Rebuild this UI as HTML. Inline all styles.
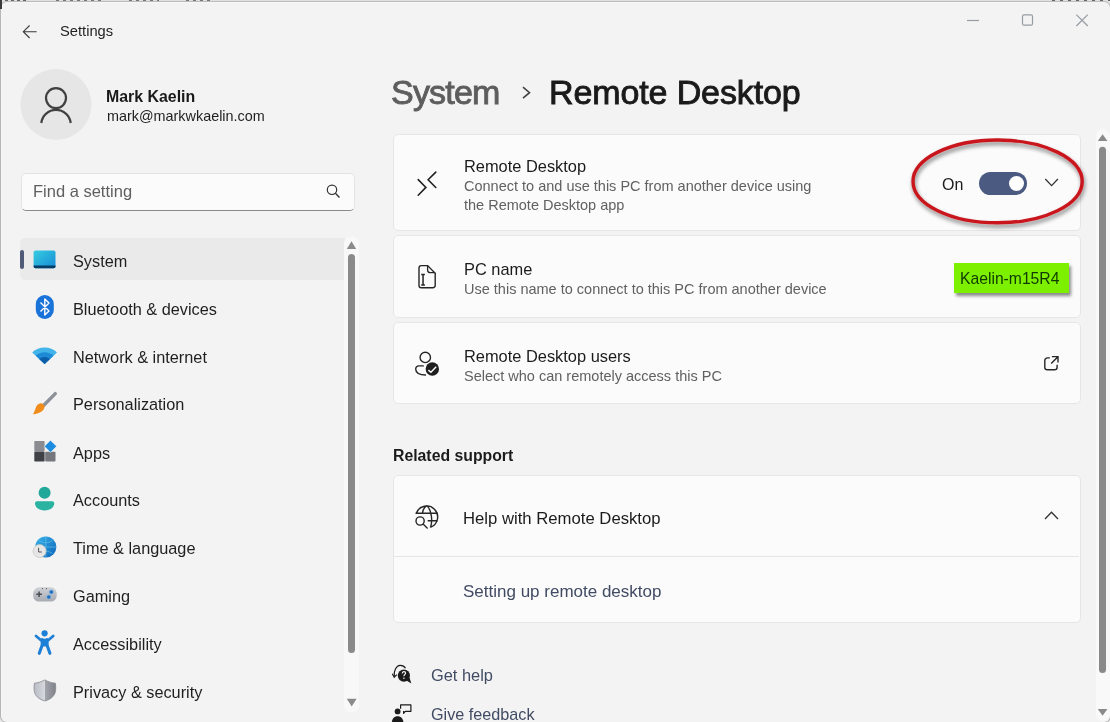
<!DOCTYPE html>
<html><head><meta charset="utf-8">
<style>
html,body{margin:0;padding:0;}
body{width:1110px;height:722px;overflow:hidden;position:relative;background:#e8e8e8;font-family:"Liberation Sans",sans-serif;}
#win{position:absolute;left:0;top:1px;width:1109px;height:720px;background:#f3f3f3;border-radius:7px;border:1px solid #bcbcbc;border-left-color:#b5b5b5;box-shadow:inset 1px 1px 0 #f7f7f7;}
.t{position:absolute;line-height:1;white-space:nowrap;color:#1b1b1b;will-change:transform;}
.card{position:absolute;left:393px;width:687.5px;background:#fbfbfb;border:1px solid #e6e6e6;border-radius:5px;box-sizing:border-box;}
svg{position:absolute;overflow:visible;}
.nav{font-size:16.3px;left:73px;color:#1f1f1f;}
.desc{font-size:14.5px;color:#616161;left:464px;}
.ctitle{font-size:16.4px;left:464px;color:#1b1b1b;}
</style></head><body>
<!-- background window strip -->
<div style="position:absolute;left:0;top:0;width:1110px;height:2px;background:#e0e0e0"></div>
<div id="win"></div>

<div style="position:absolute;left:0;top:0;width:2px;height:9px;background:#3a3a3a"></div>
<div style="position:absolute;left:5px;top:0;width:23px;height:1px;background:repeating-linear-gradient(90deg,#666 0 3px,transparent 3px 6px)"></div>
<div style="position:absolute;left:56px;top:0;width:48px;height:1px;background:repeating-linear-gradient(90deg,#777 0 3px,transparent 3px 7px)"></div>
<div style="position:absolute;left:129px;top:0;width:30px;height:1px;background:repeating-linear-gradient(90deg,#777 0 3px,transparent 3px 7px)"></div>
<div style="position:absolute;left:186px;top:0;width:28px;height:1px;background:repeating-linear-gradient(90deg,#777 0 3px,transparent 3px 7px)"></div>
<div style="position:absolute;left:1052px;top:0;width:58px;height:1px;background:repeating-linear-gradient(90deg,#666 0 3px,transparent 3px 8px)"></div>
<!-- header -->
<svg style="left:0;top:0" width="1110" height="722" viewBox="0 0 1110 722">
  <path d="M36.7 31.7H23.6M29.6 25.5L23.3 31.7L29.6 38" fill="none" stroke="#3a3a3a" stroke-width="1.1"/>
  <path d="M967 20.5H979" stroke="#979ca4" stroke-width="1.2"/>
  <rect x="1022.5" y="14.9" width="10" height="10.3" rx="1.5" fill="none" stroke="#979ca4" stroke-width="1.2"/>
  <path d="M1076.3 14.6L1087.8 26M1087.8 14.6L1076.3 26" stroke="#979ca4" stroke-width="1.2"/>
  <circle cx="56" cy="104.5" r="35.5" fill="#e6e6e6"/>
  <circle cx="56" cy="98.1" r="10" fill="none" stroke="#404040" stroke-width="2.2"/>
  <path d="M41.3 123A14.8 14.8 0 0 1 70.7 123" fill="none" stroke="#404040" stroke-width="2.2"/>
</svg>
<div class="t" style="left:60.2px;top:23.8px;font-size:14.7px;color:#1f1f1f">Settings</div>
<div class="t" style="left:106.3px;top:89px;font-size:15.9px;font-weight:bold;color:#1a1a1a">Mark Kaelin</div>
<div class="t" style="left:106.5px;top:109.1px;font-size:14.4px;color:#1f1f1f">mark@markwkaelin.com</div>

<!-- search -->
<div style="position:absolute;left:21px;top:173px;width:334px;height:38px;box-sizing:border-box;background:#fbfbfb;border:1px solid #e4e4e4;border-bottom:1px solid #8a8a8a;border-radius:5px"></div>
<div class="t" style="left:33px;top:183px;font-size:16.5px;color:#5f5f5f">Find a setting</div>
<svg style="left:0;top:0" width="1110" height="722">
  <circle cx="332" cy="189.8" r="4.7" fill="none" stroke="#333" stroke-width="1.2"/>
  <path d="M335.4 193.2L339.5 197.5" stroke="#333" stroke-width="1.3"/>
</svg>

<!-- nav selected -->
<div style="position:absolute;left:20px;top:238px;width:324.5px;height:42px;background:#eaeaea;border-radius:5px 1px 1px 5px"></div>
<div style="position:absolute;left:20px;top:250px;width:4px;height:19.4px;background:#4f5a78;border-radius:2px"></div>

<div class="t nav" style="top:252.7px">System</div>
<div class="t nav" style="top:300.7px">Bluetooth &amp; devices</div>
<div class="t nav" style="top:348.5px">Network &amp; internet</div>
<div class="t nav" style="top:396.4px">Personalization</div>
<div class="t nav" style="top:444.5px">Apps</div>
<div class="t nav" style="top:492.3px">Accounts</div>
<div class="t nav" style="top:540.2px">Time &amp; language</div>
<div class="t nav" style="top:588.2px">Gaming</div>
<div class="t nav" style="top:635.8px">Accessibility</div>
<div class="t nav" style="top:683.9px">Privacy &amp; security</div>

<!-- nav icons -->
<svg style="left:0;top:0" width="1110" height="722">
  <defs>
    <linearGradient id="gsys" x1="0" y1="0" x2="1" y2="1"><stop offset="0" stop-color="#36cde0"/><stop offset="1" stop-color="#168ad6"/></linearGradient>
    <linearGradient id="gtime" x1="0" y1="0" x2="1" y2="1"><stop offset="0" stop-color="#38b4ea"/><stop offset="1" stop-color="#0d62b8"/></linearGradient>
    <linearGradient id="ggam" x1="0" y1="0" x2="0" y2="1"><stop offset="0" stop-color="#cfd2d7"/><stop offset="1" stop-color="#a7abb1"/></linearGradient>
    <linearGradient id="gsh" x1="0" y1="0" x2="1" y2="0"><stop offset="0" stop-color="#b9bdc4"/><stop offset="0.5" stop-color="#d6d9de"/><stop offset="0.5" stop-color="#a3a7ad"/><stop offset="1" stop-color="#7f8389"/></linearGradient>
  </defs>
  <!-- system -->
  <rect x="33.6" y="250.5" width="21.9" height="17.8" rx="1.8" fill="url(#gsys)"/>
  <path d="M33.6 265.6H55.5V266.5A1.8 1.8 0 0 1 53.7 268.3H35.4A1.8 1.8 0 0 1 33.6 266.5Z" fill="#063d66"/>
  <!-- bluetooth -->
  <rect x="35.8" y="295" width="18" height="24" rx="9" fill="#1a73d9"/>
  <path d="M40.5 302.5L49 311L44.8 315V299L49 303L40.5 311.5" fill="none" stroke="#fff" stroke-width="1.4" stroke-linejoin="round"/>
  <!-- wifi -->
  <path d="M32.2 352.5A18 18 0 0 1 57 352.5L44.6 364Z" fill="#43b4ea"/>
  <path d="M35.7 355.8A13 13 0 0 1 53.5 355.8L44.6 364Z" fill="#1e8ad6"/>
  <path d="M39.2 359A8 8 0 0 1 50 359L44.6 364Z" fill="#0d5ea8"/>
  <!-- brush -->
  <path d="M55.3 393.6L43.8 405.2" stroke="#8d9198" stroke-width="3.4" stroke-linecap="round"/>
  <path d="M39.8 403.4C41.8 402.8 44.3 404.3 44.6 406.4C44.3 410.2 40.5 413.6 33 414.2C34.4 412.2 35.2 409 36.3 406.6C37.1 404.9 38.3 403.8 39.8 403.4Z" fill="#f08c1c"/>
  <!-- apps -->
  <rect x="34.3" y="441" width="10.3" height="10.3" rx="0.8" fill="#8a8c91"/>
  <rect x="34.3" y="451.6" width="10.3" height="10" rx="0.8" fill="#3f4146"/>
  <rect x="45.2" y="451.8" width="10.3" height="9.8" rx="0.8" fill="#75777c"/>
  <path d="M50.5 440.2L56.6 446.3L50.5 452.4L44.4 446.3Z" fill="#1b8ce0" stroke="#f3f3f3" stroke-width="0.6"/>
  <!-- accounts -->
  <circle cx="44.6" cy="492.8" r="6" fill="#22a898"/>
  <path d="M37 501.3H52.2A2 2 0 0 1 54.2 503.3C54.2 507.5 50 510.5 44.6 510.5C39.2 510.5 35 507.5 35 503.3A2 2 0 0 1 37 501.3Z" fill="#29b3a0"/>
  <!-- time -->
  <circle cx="45.8" cy="547" r="10.6" fill="url(#gtime)"/>
  <path d="M36 547H56M45.8 536.5V557.5M39 540.5C43.5 543.5 48 543.5 52.5 540.5M39 553.5C43.5 550.5 48 550.5 52.5 553.5" stroke="#6cc6f0" stroke-width="0.6" fill="none"/>
  <circle cx="39.6" cy="551" r="6.5" fill="#e6e6e6" stroke="#c4c4c4" stroke-width="0.7"/>
  <path d="M38.6 547.8V552H41.8" stroke="#555" stroke-width="1" fill="none"/>
  <!-- gaming -->
  <path d="M39 587.2H50.8C54 587.2 56.8 590.5 56.8 594.5C56.8 598.8 54.3 601.6 51 601.6H38.8C35.5 601.6 33 598.8 33 594.5C33 590.5 35.8 587.2 39 587.2Z" fill="url(#ggam)"/>
  <path d="M36.3 594.2H41.9M39.1 591.4V597" stroke="#4a4d52" stroke-width="1.5"/>
  <circle cx="42.5" cy="588.6" r="0.6" fill="#555"/><circle cx="46.5" cy="588.6" r="0.6" fill="#555"/>
  <circle cx="51.3" cy="592" r="2.1" fill="#1f6fc0" stroke="#8cb8e6" stroke-width="0.6"/><circle cx="48.8" cy="597" r="2.1" fill="#1f6fc0" stroke="#8cb8e6" stroke-width="0.6"/>
  <!-- accessibility -->
  <circle cx="44.6" cy="633.3" r="3.1" fill="#1e7fd6"/>
  <path d="M36 636L41 640.2H48.2L53.2 636" stroke="#1e7fd6" stroke-width="2.8" fill="none" stroke-linecap="round" stroke-linejoin="round"/>
  <path d="M42.2 639.5V645L39.3 653.3M47 639.5V645L49.9 653.3" stroke="#1e7fd6" stroke-width="3.1" fill="none" stroke-linecap="round"/>
  <path d="M41 639.5H48.2V646.5H41Z" fill="#1e7fd6"/>
  <!-- shield -->
  <path d="M44.9 679.9C40.8 682.2 37.5 682.9 34.4 683.2C34 686 34 688 34.2 690.5C34.8 696 39 699.3 44.9 701C50.8 699.3 55 696 55.6 690.5C55.8 688 55.8 686 55.4 683.2C52.3 682.9 49 682.2 44.9 679.9Z" fill="url(#gsh)" stroke="#85888e" stroke-width="0.8"/>
  <!-- nav scrollbar -->
  <rect x="344" y="236.5" width="15" height="476" rx="7" fill="#f8f8f8"/>
  <path d="M346.8 248.9L351.5 241.3L356.2 248.9Z" fill="#8a8a8a"/>
  <rect x="348" y="254" width="7" height="399" rx="3.5" fill="#8a8a8a"/>
  <path d="M346.8 698.8L351.7 706.4L356.6 698.8Z" fill="#8a8a8a"/>
</svg>

<!-- main title -->
<div class="t" style="left:390.5px;top:74.5px;font-size:34px;color:#5d5d5d;letter-spacing:-0.8px;-webkit-text-stroke:0.9px #5d5d5d">System</div>
<svg style="left:0;top:0" width="1110" height="722">
  <path d="M523 87.2L529.5 92.7L523 98.2" fill="none" stroke="#444" stroke-width="1.6"/>
</svg>
<div class="t" style="left:548.7px;top:74.5px;font-size:34px;color:#1a1a1a;letter-spacing:-0.12px;-webkit-text-stroke:0.9px #1a1a1a">Remote Desktop</div>

<!-- cards -->
<div class="card" style="top:134px;height:96.5px"></div>
<div class="card" style="top:235px;height:82.5px"></div>
<div class="card" style="top:321.5px;height:82px"></div>

<div class="t ctitle" style="top:157.5px">Remote Desktop</div>
<div class="t desc" style="top:178.5px">Connect to and use this PC from another device using</div>
<div class="t desc" style="top:198.1px">the Remote Desktop app</div>
<div class="t ctitle" style="top:261.1px">PC name</div>
<div class="t desc" style="top:282.1px">Use this name to connect to this PC from another device</div>
<div class="t ctitle" style="top:347.7px">Remote Desktop users</div>
<div class="t desc" style="top:368.5px">Select who can remotely access this PC</div>

<div class="t" style="left:941.5px;top:176.9px;font-size:16px;color:#1b1b1b">On</div>
<div style="position:absolute;left:979.3px;top:171.8px;width:48px;height:23px;border-radius:11.5px;background:#4a5a80"></div>
<div style="position:absolute;left:1009px;top:176px;width:15px;height:15px;border-radius:50%;background:#fff"></div>

<svg style="left:0;top:0" width="1110" height="722">
  <defs>
    <filter id="shd" x="-20%" y="-30%" width="140%" height="160%"><feGaussianBlur in="SourceAlpha" stdDeviation="2"/><feOffset dx="1" dy="2.5"/><feComponentTransfer><feFuncA type="linear" slope="0.5"/></feComponentTransfer><feMerge><feMergeNode/><feMergeNode in="SourceGraphic"/></feMerge></filter>
  </defs>
  <!-- remote desktop icon -->
  <path d="M418.2 179.6L425.9 187.4L418.2 195.3M435.8 172.1L428.1 179.8L435.8 187.5" fill="none" stroke="#1f1f1f" stroke-width="1.55" stroke-linecap="round"/>
  <!-- chevron down -->
  <path d="M1045.3 179L1051.6 185.6L1057.9 179" fill="none" stroke="#333" stroke-width="1.3"/>
  <!-- ellipse -->
  <ellipse cx="997.6" cy="181.4" rx="84.6" ry="41.4" fill="none" stroke="#c8151d" stroke-width="3.4" filter="url(#shd)"/>
  <!-- pc name icon -->
  <path d="M421.3 265.6H427.6L435.2 273.2V285.4A2.3 2.3 0 0 1 432.9 287.7H421.3A2.3 2.3 0 0 1 419 285.4V267.9A2.3 2.3 0 0 1 421.3 265.6Z" fill="none" stroke="#262626" stroke-width="1.4"/>
  <path d="M427.6 265.6V269.9A2.8 2.8 0 0 0 430.4 272.7H435.2" fill="none" stroke="#262626" stroke-width="1.3"/>
  <path d="M421.2 274.6H424.9M423.05 274.6V285M421.2 285H424.9" fill="none" stroke="#262626" stroke-width="1.5"/>
  <!-- users icon -->
  <circle cx="425.3" cy="357.4" r="5.2" fill="none" stroke="#262626" stroke-width="1.4"/>
  <path d="M423.8 365.9H418.8A3.1 3.1 0 0 0 415.7 369C415.7 372.6 419.3 375 426 375" fill="none" stroke="#262626" stroke-width="1.4"/>
  <circle cx="432.3" cy="369" r="7.6" fill="#fbfbfb"/>
  <circle cx="432.3" cy="369" r="6.7" fill="#1f1f1f"/>
  <path d="M428.4 370.1L430.9 372.3L436.2 366.8" fill="none" stroke="#fff" stroke-width="1.4"/>
  <!-- ext link -->
  <path d="M1049.9 357.9H1047.4A2.6 2.6 0 0 0 1044.8 360.5V367.2A2.6 2.6 0 0 0 1047.4 369.8H1054.5A2.6 2.6 0 0 0 1057.1 367.2V364.8" fill="none" stroke="#262626" stroke-width="1.4"/>
  <path d="M1051.2 363.4L1057.7 356.9M1051.9 356.6H1058V362.6" fill="none" stroke="#262626" stroke-width="1.4"/>
</svg>

<div style="position:absolute;left:953.5px;top:263.2px;width:115.8px;height:30.3px;background:#7df000;box-shadow:2px 3px 3px rgba(0,0,0,0.45)"></div>
<div class="t" style="left:959.8px;top:271.3px;font-size:15.7px;color:#103a00">Kaelin-m15R4</div>

<!-- related support -->
<div class="t" style="left:393.3px;top:447.6px;font-size:15.8px;font-weight:bold;color:#1b1b1b">Related support</div>
<div class="card" style="top:475px;height:147.5px"></div>
<div style="position:absolute;left:394px;top:556px;width:685px;height:1px;background:#e5e5e5"></div>
<div class="t" style="left:463.4px;top:510.7px;font-size:16.7px;color:#1b1b1b">Help with Remote Desktop</div>
<div class="t" style="left:463px;top:583.2px;font-size:17px;color:#414b63">Setting up remote desktop</div>

<svg style="left:0;top:0" width="1110" height="722">
  <!-- globe search -->
  <path d="M416.3 513.2A11 11 0 1 1 430.4 527.3M415.5 513.2H438M427.7 520.7H437.8M426.7 505.7C424 507.5 422.7 510.3 422.4 513.2M426.7 505.7C431.8 509.5 432.8 521.5 430.4 527.6" fill="none" stroke="#262626" stroke-width="1.4"/>
  <circle cx="420.1" cy="521" r="4.1" fill="none" stroke="#262626" stroke-width="1.4"/>
  <path d="M423.1 524L427.6 528.5" stroke="#262626" stroke-width="1.4"/>
  <!-- chevron up -->
  <path d="M1045 519L1051.5 512.3L1058 519" fill="none" stroke="#333" stroke-width="1.3"/>
  <!-- get help icon -->
  <circle cx="403.9" cy="675.6" r="6.1" fill="#1b1b1b"/>
  <path d="M406.5 680.5L411.3 683.4L409.6 677.8Z" fill="#1b1b1b"/>
  <path d="M394.2 676.2C393.6 670.5 396.5 665.5 400 665.3C402.5 665.2 404.5 666.5 405.5 668.3" fill="none" stroke="#1b1b1b" stroke-width="1.2"/>
  <path d="M392.3 673.8L394.2 677.3L396.8 674.6" fill="none" stroke="#1b1b1b" stroke-width="1.2"/>
  <path d="M402.2 673.6C402.2 672.3 403 671.6 403.9 671.6C404.9 671.6 405.6 672.3 405.6 673.2C405.6 674.4 403.9 674.6 403.9 676.3" fill="none" stroke="#fff" stroke-width="1.1"/>
  <circle cx="403.9" cy="678.3" r="0.7" fill="#fff"/>
  <!-- give feedback icon -->
  <path d="M400.6 708.8V704.9H410.9V711.3H405.3L403.6 713.3V711" fill="none" stroke="#1b1b1b" stroke-width="1.2" stroke-linejoin="round"/>
  <circle cx="397.6" cy="711.4" r="2.9" fill="#1b1b1b"/>
  <path d="M391.8 723C391.8 718.8 394.2 716.3 397.6 716.3C401 716.3 403.4 718.8 403.4 723Z" fill="#1b1b1b"/>
  <!-- main scrollbar -->
  <rect x="1096" y="129" width="14" height="592" rx="7" fill="#f9f9f9"/>
  <path d="M1097.8 141.1L1102.6 134.2L1107.4 141.1Z" fill="#8a8a8a"/>
  <rect x="1099" y="146.7" width="7" height="526.3" rx="3.5" fill="#8a8a8a"/>
  <path d="M1097.8 709L1102.6 715.7L1107.4 709Z" fill="#8a8a8a"/>
</svg>
<div class="t" style="left:431.2px;top:667.3px;font-size:16.4px;color:#414b63">Get help</div>
<div class="t" style="left:431.2px;top:706.3px;font-size:16.2px;color:#414b63">Give feedback</div>
</body></html>
